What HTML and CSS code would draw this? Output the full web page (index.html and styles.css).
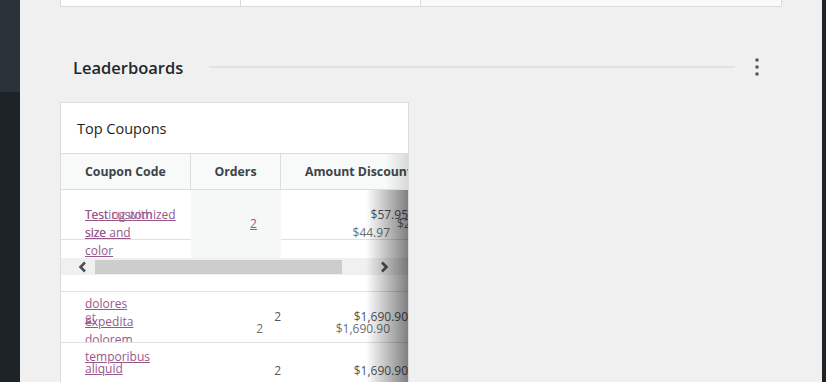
FILE: index.html
```html
<!DOCTYPE html>
<html lang="en">
<head>
    <meta charset="UTF-8">
    <meta name="viewport" content="width=device-width, initial-scale=1.0">
    <title>Analytics - Leaderboards</title>
    <link rel="stylesheet" href="styles.css">
</head>
<body>
    <div class="sidebar">
        <div class="sidebar-top"></div>
    </div>

    <main class="content">
        <div class="summary">
            <div class="summary-cell"></div>
            <div class="summary-cell"></div>
            <div class="summary-cell summary-cell-muted"></div>
        </div>

        <div class="section-header">
            <h2>Leaderboards</h2>
            <span class="rule"></span>
            <button class="more-btn" aria-label="Choose which leaderboards to display">
                <svg width="4" height="18" viewBox="0 0 4 18">
                    <circle cx="2" cy="2" r="1.8"/>
                    <circle cx="2" cy="9" r="1.8"/>
                    <circle cx="2" cy="16" r="1.8"/>
                </svg>
            </button>
        </div>

        <div class="card">
            <div class="card-title">Top Coupons</div>

            <div class="table-head">
                <div class="th">Coupon Code</div>
                <div class="th th-center">Orders</div>
                <div class="th th-amount">Amount Discounted</div>
                <span class="head-shadow"></span>
            </div>

            <div class="table-body">
                <!-- row 1, the two renders of the table overlap here -->
                <div class="row row-first">
                    <div class="cell cell-code cell-ruled">
                        <a href="#">Test customized<br>size and<br>color</a>
                        <a href="#" class="ghost ghost-code">Testing with<br>size</a>
                    </div>
                    <div class="cell cell-orders cell-shaded">
                        <a href="#">2</a>
                    </div>
                    <div class="cell cell-amount cell-ruled">
                        $57.95
                        <span class="ghost ghost-amount">$44.97</span>
                        <span class="ghost ghost-cut">$2</span>
                    </div>
                </div>

                <div class="hscroll">
                    <svg class="arrow" width="10" height="12" viewBox="0 0 10 12"><polyline points="7,1.5 2.5,6 7,10.5"/></svg>
                    <span class="thumb"></span>
                    <svg class="arrow arrow-right" width="10" height="12" viewBox="0 0 10 12"><polyline points="3,1.5 7.5,6 3,10.5"/></svg>
                </div>

                <div class="row row-empty"></div>

                <div class="row row-second">
                    <div class="cell cell-code">
                        <a href="#">dolores expedita dolorem</a>
                        <a href="#" class="ghost ghost-et">et</a>
                    </div>
                    <div class="cell cell-orders cell-num">
                        2
                        <span class="ghost ghost-orders">2</span>
                    </div>
                    <div class="cell cell-amount cell-num">
                        $1,690.90
                        <span class="ghost ghost-total">$1,690.90</span>
                    </div>
                </div>

                <div class="row row-third">
                    <div class="cell cell-code">
                        <a href="#">temporibus aliquid</a>
                    </div>
                    <div class="cell cell-orders cell-num">2</div>
                    <div class="cell cell-amount cell-num">$1,690.90</div>
                </div>

                <span class="body-shadow"></span>
            </div>
        </div>
    </main>

    <div class="edge"></div>
</body>
</html>
```

FILE: styles.css
```css
* {
    box-sizing: border-box;
}
body {
    margin: 0;
    height: 382px;
    overflow: hidden;
    display: flex;
    background: #f0f0f1;
    font-family: "Open Sans", "Noto Sans", sans-serif;
    color: #3c434a;
}
.sidebar {
    width: 20px;
    flex-shrink: 0;
    background: #1d2327;
}
.sidebar-top {
    height: 92px;
    background: #2c3338;
}
.edge {
    width: 4px;
    flex-shrink: 0;
    background: #1d2327;
}
.content {
    flex: 1;
    padding-left: 40px;
}

/* bottom of the summary card above */
.summary {
    width: 722px;
    height: 7px;
    display: flex;
    background: #fff;
    border: 1px solid #dcdcde;
    border-top: none;
}
.summary-cell {
    width: 180px;
    border-right: 1px solid #dcdcde;
}
.summary-cell-muted {
    flex: 1;
    border-right: none;
    background: #f9fafa;
}

.section-header {
    display: flex;
    align-items: center;
    height: 34px;
    margin-top: 43px;
    width: 722px;
}
.section-header h2 {
    margin: 0 0 0 13px;
    font-size: 16.5px;
    font-weight: 600;
    color: #23282d;
}
.rule {
    flex: 1;
    height: 2px;
    background: #e2e2e3;
    margin: 0 12px 0 26px;
}
.more-btn {
    border: none;
    background: none;
    padding: 0;
    width: 20px;
    margin-right: 15px;
    display: flex;
    justify-content: center;
    fill: #50575e;
}

.card {
    width: 349px;
    margin-top: 18px;
    background: #fff;
    border: 1px solid #dcdcde;
    border-bottom: none;
    overflow: hidden;
}
.card-title {
    height: 50px;
    padding-left: 16px;
    display: flex;
    align-items: center;
    font-size: 14.5px;
    color: #1e1e1e;
}

.table-head {
    position: relative;
    display: grid;
    grid-template-columns: 130px 90px 1fr;
    height: 37px;
    background: #f8f9f9;
    border-top: 1px solid #dcdcde;
    border-bottom: 1px solid #dcdcde;
}
.th {
    padding-left: 24px;
    display: flex;
    align-items: center;
    font-size: 12.3px;
    font-weight: 700;
    color: #3c434a;
    white-space: nowrap;
    border-right: 1px solid #dcdcde;
}
.th-center {
    justify-content: center;
    padding-left: 0;
}
.th-amount {
    border-right: none;
}
.head-shadow {
    position: absolute;
    top: 0;
    right: 0;
    bottom: 0;
    width: 22px;
    background: linear-gradient(90deg, rgba(0, 0, 0, 0), rgba(0, 0, 0, 0.13));
}

.table-body {
    position: relative;
    height: 200px;
    font-size: 12px;
    line-height: 18px;
}
.table-body a {
    color: #96588a;
}
.row {
    display: grid;
    grid-template-columns: 130px 90px 1fr;
    background: #fff;
}
.cell {
    position: relative;
}
.cell-code {
    padding: 16px 14px 0 24px;
}
.cell-ruled {
    height: 50px;
    border-bottom: 1px solid #e0e0e0;
}
.cell-shaded {
    background: #f6f7f7;
    height: 68px;
    display: flex;
    align-items: center;
    justify-content: center;
    padding-left: 35px;
}
.cell-amount {
    padding-top: 16px;
    text-align: right;
    color: #50575e;
    white-space: nowrap;
}
.ghost {
    position: absolute;
    opacity: 0.85;
}
.ghost-code {
    left: 24px;
    top: 16px;
    white-space: nowrap;
}
.ghost-amount {
    right: 18px;
    top: 34px;
}
.ghost-cut {
    left: 116px;
    top: 25px;
}

.hscroll {
    height: 17px;
    display: flex;
    align-items: center;
    background: #f0f0f0;
    padding-left: 17px;
}
.arrow {
    flex-shrink: 0;
    fill: none;
    stroke: #505050;
    stroke-width: 2.6;
}
.thumb {
    width: 247px;
    height: 14px;
    margin-left: 7px;
    background: #cdcdcd;
}
.arrow-right {
    margin-left: 37px;
}

.row-empty {
    height: 17px;
    border-bottom: 1px solid #e0e0e0;
}
.row-second {
    height: 51px;
    border-bottom: 1px solid #e0e0e0;
    overflow: hidden;
}
.row-second .cell-code {
    padding-top: 3px;
    padding-right: 30px;
}
.cell-num {
    padding-top: 16px;
    text-align: right;
    color: #50575e;
    white-space: nowrap;
}
.ghost-et {
    left: 24px;
    top: 17px;
}
.ghost-orders {
    right: 18px;
    top: 28px;
}
.ghost-total {
    right: 18px;
    top: 28px;
}
.row-third .cell-code {
    padding-top: 8px;
    line-height: 12px;
}
.row-third .cell-num {
    padding-top: 19px;
}

.body-shadow {
    position: absolute;
    top: 0;
    right: 0;
    bottom: 0;
    width: 42px;
    background: linear-gradient(90deg, rgba(0, 0, 0, 0), rgba(0, 0, 0, 0.5));
}
```
